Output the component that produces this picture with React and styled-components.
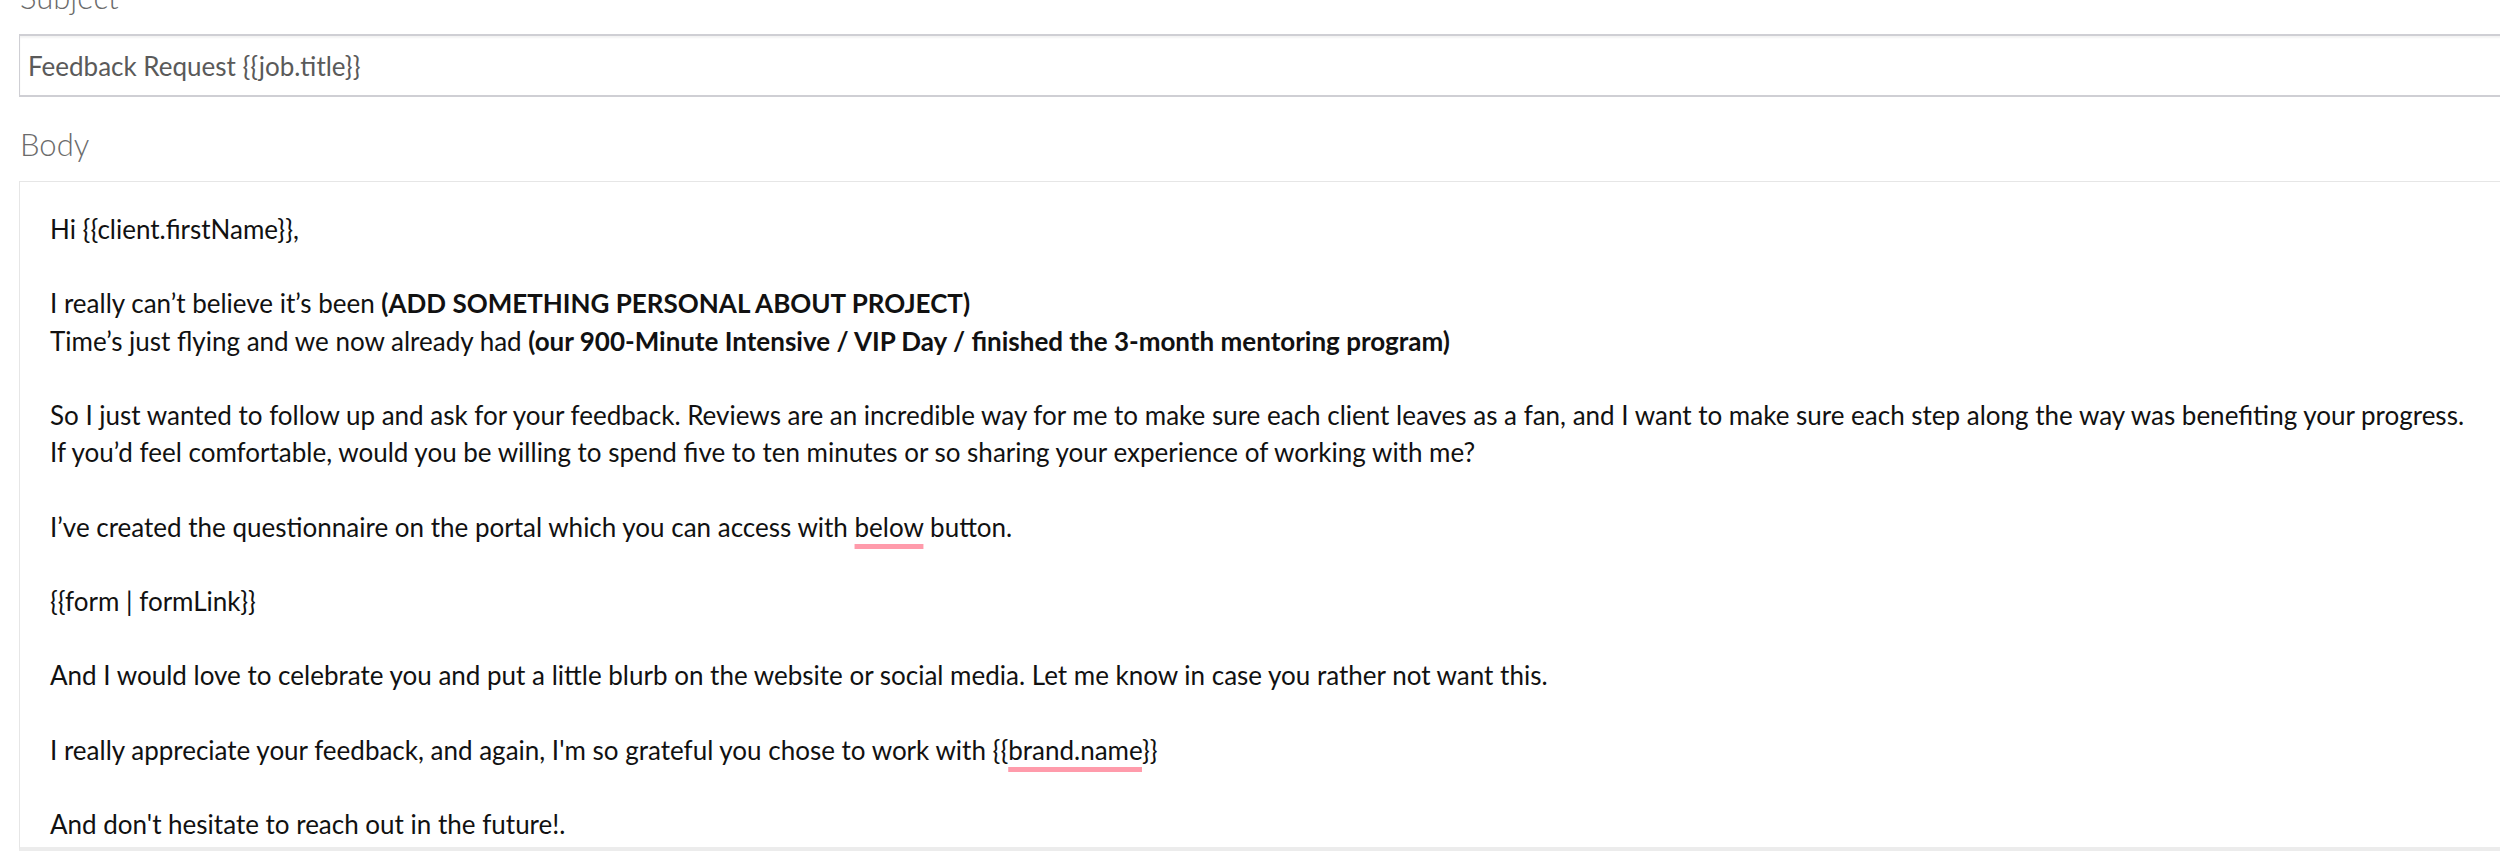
import React from "react";
import styled, { createGlobalStyle } from "styled-components";

const GlobalStyle = createGlobalStyle`
    html, body {
        margin: 0;
        padding: 0;
        background: #ffffff;
        overflow: hidden;
    }
    body {
        font-family: Lato, "Open Sans", sans-serif;
    }
`;

const Page = styled.div`
    width: 2700px;
    margin-top: -21px;
    padding-left: 19px;
`;

const FieldLabel = styled.div`
    font-family: Lato, sans-serif;
    font-weight: 300;
    font-size: 31px;
    line-height: 36px;
    color: #6b6b6b;
    padding-left: 1px;
    margin-bottom: 19px;
`;

const SubjectInput = styled.div`
    height: 59px;
    display: flex;
    align-items: center;
    padding-left: 8px;
    border: 2px solid #cfcfd4;
    border-left-width: 1px;
    box-shadow: inset 0 2px 2px rgba(0, 0, 0, 0.05);
    font-size: 26px;
    color: #5a5a5a;
    margin-bottom: 29px;
`;

const Editor = styled.div`
    border: 1px solid #e6e6e6;
    border-bottom: 4px solid #ececec;
    padding: 29px 30px 4px;
    color: #111111;
    font-size: 26px;
    line-height: 37.2px;
    white-space: nowrap;
`;

const Line = styled.div`
    height: 37.2px;
`;

const Spell = styled.span`
    text-decoration: underline;
    text-decoration-color: #ff9bab;
    text-decoration-thickness: 5px;
    text-underline-offset: 7px;
    text-decoration-skip-ink: none;
`;

const lines = [
    <>Hi {"{{client.firstName}}"},</>,
    null,
    <>I really can’t believe it’s been <b>(ADD SOMETHING PERSONAL ABOUT PROJECT)</b></>,
    <>Time’s just flying and we now already had <b>(our 900-Minute Intensive / VIP Day / finished the 3-month mentoring program)</b></>,
    null,
    <>So I just wanted to follow up and ask for your feedback. Reviews are an incredible way for me to make sure each client leaves as a fan, and I want to make sure each step along the way was benefiting your progress.</>,
    <>If you’d feel comfortable, would you be willing to spend five to ten minutes or so sharing your experience of working with me?</>,
    null,
    <>I’ve created the questionnaire on the portal which you can access with <Spell>below</Spell> button.</>,
    null,
    <>{"{{form | formLink}}"}</>,
    null,
    <>And I would love to celebrate you and put a little blurb on the website or social media. Let me know in case you rather not want this.</>,
    null,
    <>I really appreciate your feedback, and again, I'm so grateful you chose to work with {"{{"}<Spell>brand.name</Spell>{"}}"}</>,
    null,
    <>And don't hesitate to reach out in the future!.</>,
];

export default function App() {
    return (
        <Page>
            <GlobalStyle/>
            <FieldLabel>Subject</FieldLabel>
            <SubjectInput>Feedback Request {"{{job.title}}"}</SubjectInput>
            <FieldLabel>Body</FieldLabel>
            <Editor>
                {lines.map((content, index) =>
                    <Line key={index}>{content}</Line>
                )}
            </Editor>
        </Page>
    );
}
